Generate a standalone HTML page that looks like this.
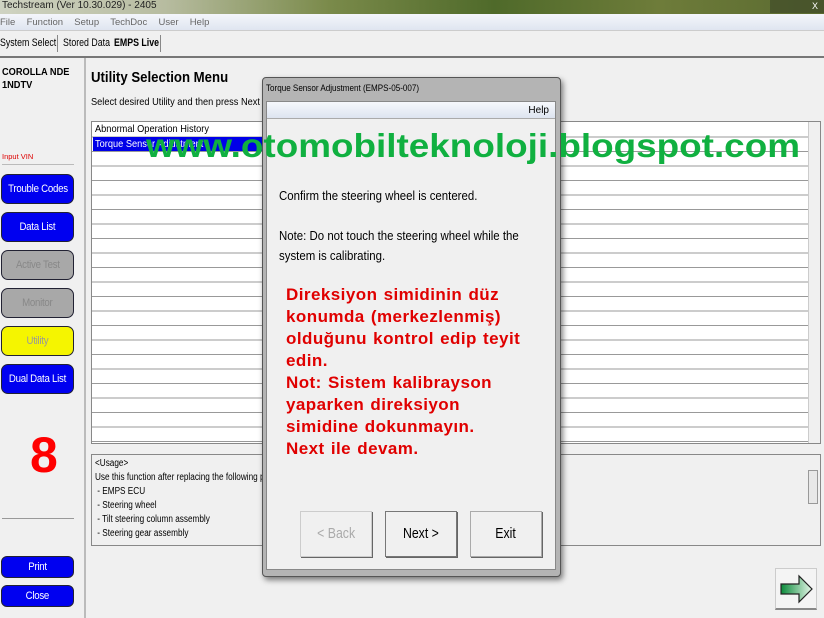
<!DOCTYPE html>
<html><head><meta charset="utf-8"><style>
*{margin:0;padding:0;box-sizing:border-box}
body{width:824px;height:618px;overflow:hidden;background:#f0f0f0;font-family:"Liberation Sans",sans-serif;position:relative;font-size:11px;color:#000}
.abs{position:absolute}
.n{display:inline-block;transform:scaleX(.8);transform-origin:left;white-space:nowrap}
.btn{position:absolute;left:1px;width:73px;height:30px;border-radius:7px;border:1px solid #223;color:#fff;font-size:11px;text-align:center;line-height:28px;letter-spacing:-.3px}
.btn span{display:inline-block;transform:scaleX(.88)}
.blue{background:#0000f0}
.gray{background:#a8a8a8;color:#888}
.dbtn{position:absolute;top:511px;width:72px;height:46px;border:1px solid #aaa;background:#f0f0f0;font-size:15px;text-align:center;line-height:44px;box-shadow:1px 1px 0 #666}
.dbtn span{display:inline-block;transform:scaleX(.82)}
.red{position:absolute;left:286px;color:#e00000;font-weight:bold;font-size:17px;line-height:22px;top:284px;letter-spacing:.45px;word-spacing:1px}
</style></head><body>
<div class="abs" style="left:0;top:0;width:824px;height:14px;background:linear-gradient(90deg,#cfd3c2 0,#b7bca0 20%,#7a8a4a 40%,#4f6a2a 60%,#6e7c3a 80%,#5a6a30 100%)"></div>
<div class="abs" style="left:2px;top:0;font-size:10px;color:#222">Techstream (Ver 10.30.029) - 2405</div>
<div class="abs" style="left:770px;top:0;width:54px;height:13px;background:rgba(60,70,40,.6);color:#fff;font-size:9px;line-height:12px;padding-left:42px">X</div>
<div class="abs" style="left:0;top:14px;width:824px;height:17px;background:linear-gradient(#f4f6fb,#dfe5f0);border-bottom:1px solid #ccc"></div>
<div class="abs" style="left:0;top:17px;font-size:9.5px;color:#666;word-spacing:3px">File&nbsp; Function&nbsp; Setup&nbsp; TechDoc&nbsp; User&nbsp; Help</div>
<div class="abs" style="left:0;top:37px;font-size:11px"><span class="n">System Select</span></div>
<div class="abs" style="left:57px;top:35px;width:1px;height:17px;background:#888"></div>
<div class="abs" style="left:63px;top:37px;font-size:11px"><span class="n">Stored Data</span></div>
<div class="abs" style="left:114px;top:37px;font-size:11px;font-weight:bold"><span class="n">EMPS Live</span></div>
<div class="abs" style="left:160px;top:35px;width:1px;height:17px;background:#888"></div>
<div class="abs" style="left:0;top:56px;width:824px;height:2px;background:#777"></div>
<div class="abs" style="left:84px;top:58px;width:2px;height:560px;background:#bbb"></div>
<div class="abs" style="left:2px;top:66px;font-size:10.5px;font-weight:bold;line-height:13px;transform:scaleX(.88);transform-origin:left">COROLLA NDE<br>1NDTV</div>
<div class="abs" style="left:2px;top:152px;font-size:7.5px;color:#d00">Input VIN</div>
<div class="abs" style="left:2px;top:164px;width:72px;height:1px;background:#bbb"></div>
<div class="btn blue" style="top:174px"><span>Trouble Codes</span></div>
<div class="btn blue" style="top:212px"><span>Data List</span></div>
<div class="btn gray" style="top:250px"><span>Active Test</span></div>
<div class="btn gray" style="top:288px"><span>Monitor</span></div>
<div class="btn" style="top:326px;background:#f5f500;color:#999"><span>Utility</span></div>
<div class="btn blue" style="top:364px"><span>Dual Data List</span></div>
<div class="abs" style="left:30px;top:425px;color:#f00;font-size:50px;font-weight:bold;line-height:60px">8</div>
<div class="abs" style="left:2px;top:518px;width:72px;height:1px;background:#999"></div>
<div class="btn blue" style="top:556px;height:22px;line-height:20px;border-radius:6px"><span>Print</span></div>
<div class="btn blue" style="top:585px;height:22px;line-height:20px;border-radius:6px"><span>Close</span></div>

<div class="abs" style="left:91px;top:69px;font-size:15px;font-weight:bold;transform:scaleX(.88);transform-origin:left">Utility Selection Menu</div>
<div class="abs" style="left:91px;top:96px;font-size:10.5px;transform:scaleX(.88);transform-origin:left">Select desired Utility and then press Next button.</div>
<div class="abs" style="left:91px;top:121px;width:730px;height:323px;background:#fff;border:1px solid #888;
background-image:repeating-linear-gradient(#fff 0,#fff 13.5px,#999 13.5px,#999 14.5px);background-position:0 1px"></div>
<div class="abs" style="left:93px;top:137px;width:200px;height:14px;background:#0000e8"></div>
<div class="abs" style="left:95px;top:123px;font-size:10.5px;transform:scaleX(.88);transform-origin:left">Abnormal Operation History</div>
<div class="abs" style="left:95px;top:138px;font-size:10.5px;color:#fff;transform:scaleX(.88);transform-origin:left">Torque Sensor Adjustment</div>
<div class="abs" style="left:808px;top:122px;width:12px;height:321px;background:#f0f0f0;border-left:1px solid #ccc"></div>
<div class="abs" style="left:91px;top:454px;width:730px;height:92px;background:#f0f0f0;border:1px solid #888"></div>
<div class="abs" style="left:808px;top:470px;width:10px;height:34px;border:1px solid #999;background:#e8e8e8"></div>
<div class="abs" style="left:95px;top:457px;font-size:10px;line-height:14px;transform:scaleX(.82);transform-origin:left">&lt;Usage&gt;<br>Use this function after replacing the following parts.<br>&nbsp;- EMPS ECU<br>&nbsp;- Steering wheel<br>&nbsp;- Tilt steering column assembly<br>&nbsp;- Steering gear assembly</div>
<div class="abs" style="left:775px;top:568px;width:42px;height:42px;border:1px solid #ccc;border-bottom:2px solid #888;background:#f4f4f4">
<svg width="40" height="40"><defs><linearGradient id="g"><stop offset="0" stop-color="#0a8a3a"/><stop offset="1" stop-color="#e8f8ea"/></linearGradient></defs><path d="M5 15h18v-8l13 13-13 13v-8H5z" fill="url(#g)" stroke="#222" stroke-width="1.2"/></svg></div>

<div class="abs" style="left:262px;top:77px;width:299px;height:500px;background:#b4b4b4;border:1px solid #555;border-radius:4px;box-shadow:2px 3px 6px rgba(0,0,0,.5)"></div>
<div class="abs" style="left:266px;top:83px;font-size:9.5px;transform:scaleX(.85);transform-origin:left">Torque Sensor Adjustment (EMPS-05-007)</div>
<div class="abs" style="left:266px;top:101px;width:290px;height:469px;background:#f0f0f0;border:1px solid #888"></div>
<div class="abs" style="left:267px;top:102px;width:288px;height:17px;background:linear-gradient(#f6f8fc,#dde4f0);border-bottom:1px solid #aaa;font-size:10px;text-align:right;padding-right:6px;line-height:17px">Help</div>
<div class="abs" style="left:279px;top:188px;font-size:13px;transform:scaleX(.88);transform-origin:left">Confirm the steering wheel is centered.</div>
<div class="abs" style="left:279px;top:226px;font-size:13px;line-height:20px;transform:scaleX(.88);transform-origin:left">Note: Do not touch the steering wheel while the<br>system is calibrating.</div>
<div class="red">Direksiyon simidinin düz<br>konumda (merkezlenmiş)<br>olduğunu kontrol edip teyit<br>edin.<br>Not: Sistem kalibrayson<br>yaparken direksiyon<br>simidine dokunmayın.<br>Next ile devam.</div>
<div class="dbtn" style="left:300px;color:#aaa;border-color:#ccc"><span>&lt; Back</span></div>
<div class="dbtn" style="left:385px;border-color:#777"><span>Next &gt;</span></div>
<div class="dbtn" style="left:470px"><span>Exit</span></div>

<svg class="abs" style="left:0;top:0" width="824" height="618"><text x="146" y="157" textLength="654" lengthAdjust="spacingAndGlyphs" font-family="Liberation Sans" font-weight="bold" font-size="33" fill="#10b040">www.otomobilteknoloji.blogspot.com</text></svg>
</body></html>
